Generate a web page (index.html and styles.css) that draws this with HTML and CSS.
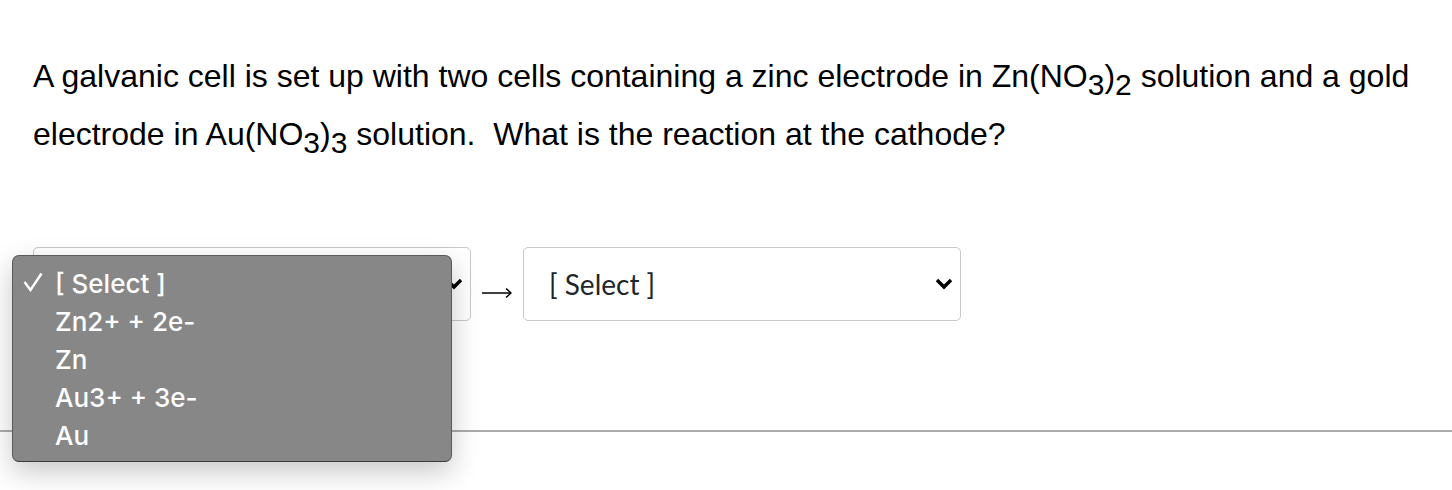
FILE: index.html
```html
<!DOCTYPE html>
<html lang="en">
<head>
  <meta charset="UTF-8">
  <title>Question</title>
  <link rel="stylesheet" href="styles.css">
</head>
<body>

  <div class="question">
    <p>A galvanic cell is set up with two cells containing a zinc electrode in Zn(NO<span class="sub">3</span>)<span class="sub">2</span> solution and a gold<br>electrode in Au(NO<span class="sub">3</span>)<span class="sub">3</span> solution.&nbsp; What is the reaction at the cathode?</p>
  </div>

  <div class="answer">
    <div class="select">
      <span></span>
      <svg class="chevron" width="18" height="12" viewBox="0 0 18 12"><polyline points="2,2 9,9 16,2" fill="none" stroke="#000" stroke-width="3.4"/></svg>
    </div>

    <svg class="arrow" width="30" height="12" viewBox="0 0 30 12"><line x1="0" y1="6" x2="29" y2="6" stroke="#000" stroke-width="1.5"/><polyline points="24,1.5 29,6 24,10.5" fill="none" stroke="#000" stroke-width="1.5"/></svg>

    <div class="select">
      <span>[ Select ]</span>
      <svg class="chevron" width="18" height="12" viewBox="0 0 18 12"><polyline points="2,2 9,9 16,2" fill="none" stroke="#000" stroke-width="3.4"/></svg>
    </div>

    <ul class="menu">
      <li><svg class="tick" width="20" height="20" viewBox="0 0 20 20"><polyline points="1.5,10 7.5,18 18.5,1.5" fill="none" stroke="#fff" stroke-width="2.4"/></svg>[ Select ]</li>
      <li>Zn2+ + 2e-</li>
      <li>Zn</li>
      <li>Au3+ + 3e-</li>
      <li>Au</li>
    </ul>
  </div>

  <div class="rule"></div>

</body>
</html>
```

FILE: styles.css
```css
body {
  margin: 0;
  min-height: 100vh;
  background: #fff;
  font-family: "Liberation Sans", Arial, sans-serif;
  color: #000;
}

.question {
  padding: 47px 33px 0;
}

.question p {
  margin: 0;
  font-size: 32px;
  line-height: 58px;
}

.sub {
  font-size: 30px;
  position: relative;
  top: 8px;
  line-height: 0;
}

.answer {
  position: relative;
  display: flex;
  align-items: center;
  gap: 11px;
  margin: 84px 0 0 33px;
}

.select {
  box-sizing: border-box;
  width: 438px;
  height: 74px;
  border: 1px solid #c8c8c8;
  border-radius: 5px;
  display: flex;
  align-items: center;
  justify-content: space-between;
  padding: 0 7px 0 25px;
  font-family: Lato, sans-serif;
  font-size: 28px;
  color: #1f262b;
}

.select span {
  margin-top: -1px;
}

.arrow {
  margin-top: 18px;
}

.menu {
  position: absolute;
  z-index: 10;
  left: -21px;
  top: 8px;
  box-sizing: border-box;
  width: 440px;
  height: 207px;
  margin: 0;
  padding: 9px 0 0;
  list-style: none;
  background: #878787;
  border: 1px solid #5a5a5a;
  border-bottom-color: #3c3c3c;
  border-radius: 7px;
  box-shadow: 0 10px 28px rgba(0, 0, 0, 0.22);
  font-family: Inter, "Noto Sans", sans-serif;
  font-size: 26px;
  font-weight: 500;
  color: #fff;
}

.menu li {
  height: 38px;
  line-height: 38px;
  padding-left: 42px;
  position: relative;
}

.tick {
  position: absolute;
  left: 10px;
  top: 7px;
}

.rule {
  margin-top: 109px;
  border-top: 2px solid #ababab;
}
```
